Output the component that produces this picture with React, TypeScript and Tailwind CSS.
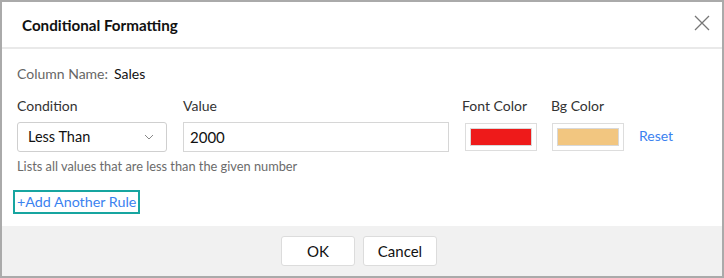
import React from "react";

export default function App() {
  return (
    <div className="w-[724px] h-[278px] bg-white border-2 border-[#aaaaaa] flex flex-col font-['Lato',sans-serif] text-[#222]">
      <div className="h-[47px] shrink-0 flex items-center justify-between pl-[20px] pr-[12px] border-b-2 border-[#e9e9e9]">
        <div className="text-[15.2px] font-bold text-[#111] mt-[2px]">Conditional Formatting</div>
        <svg width="16" height="16" viewBox="0 0 16 16" className="mt-[-3px]">
          <path d="M1 1 L15 15 M15 1 L1 15" stroke="#777" strokeWidth="1.3" fill="none" />
        </svg>
      </div>
      <div className="flex-1 pl-[15px] pt-[15px]">
        <div className="text-[14px] leading-[20px] h-[20px]">
          <span className="text-[#666]">Column Name:</span>
          <span className="ml-[6px] text-[#111]">Sales</span>
        </div>
        <div className="flex mt-[12px] text-[14px] leading-[20px] text-[#333]">
          <div className="w-[166px]">Condition</div>
          <div className="w-[279px]">Value</div>
          <div className="w-[89px]">Font Color</div>
          <div>Bg Color</div>
        </div>
        <div className="flex items-center mt-[6px]">
          <div className="w-[150px] h-[30px] border border-[#cfcfcf] rounded-[3px] flex items-center justify-between pl-[10px] pr-[12px] text-[14.5px] text-[#111]">
            <span>Less Than</span>
            <svg width="10" height="6" viewBox="0 0 10 6">
              <path d="M1 1 L5 5 L9 1" stroke="#888" strokeWidth="1" fill="none" />
            </svg>
          </div>
          <div className="ml-[16px] w-[266px] h-[30px] border border-[#d6d6d6] flex items-center pl-[6px] text-[15px] text-[#111]">
            2000
          </div>
          <div className="ml-[16px] w-[72px] h-[28px] border border-[#dddddd] p-[4px]">
            <div className="w-full h-full bg-[#ee1a1a] border border-[#d8d8d8]"></div>
          </div>
          <div className="ml-[15px] w-[72px] h-[28px] border border-[#dddddd] p-[4px]">
            <div className="w-full h-full bg-[#f2c680] border border-[#d8d8d8]"></div>
          </div>
          <div className="ml-[15px] text-[14px] text-[#3b82f0] mt-[-4px]">Reset</div>
        </div>
        <div className="mt-[5px] text-[12.8px] leading-[18px] text-[#6b6b6b]">
          Lists all values that are less than the given number
        </div>
        <div className="mt-[15px] -ml-[4px] inline-flex items-center h-[24px] px-[2px] border-2 border-[#17a5a0] text-[14.3px] text-[#3b82f0]">
          +Add Another Rule
        </div>
      </div>
      <div className="h-[50px] shrink-0 bg-[#f1f1f1] flex items-start justify-center gap-[8px] pt-[10px] pr-[6px]">
        <button className="w-[74px] h-[30px] bg-white border border-[#dcdcdc] rounded-[3px] text-[15px] text-[#111]">OK</button>
        <button className="w-[74px] h-[30px] bg-white border border-[#dcdcdc] rounded-[3px] text-[15px] text-[#111]">Cancel</button>
      </div>
    </div>
  );
}
